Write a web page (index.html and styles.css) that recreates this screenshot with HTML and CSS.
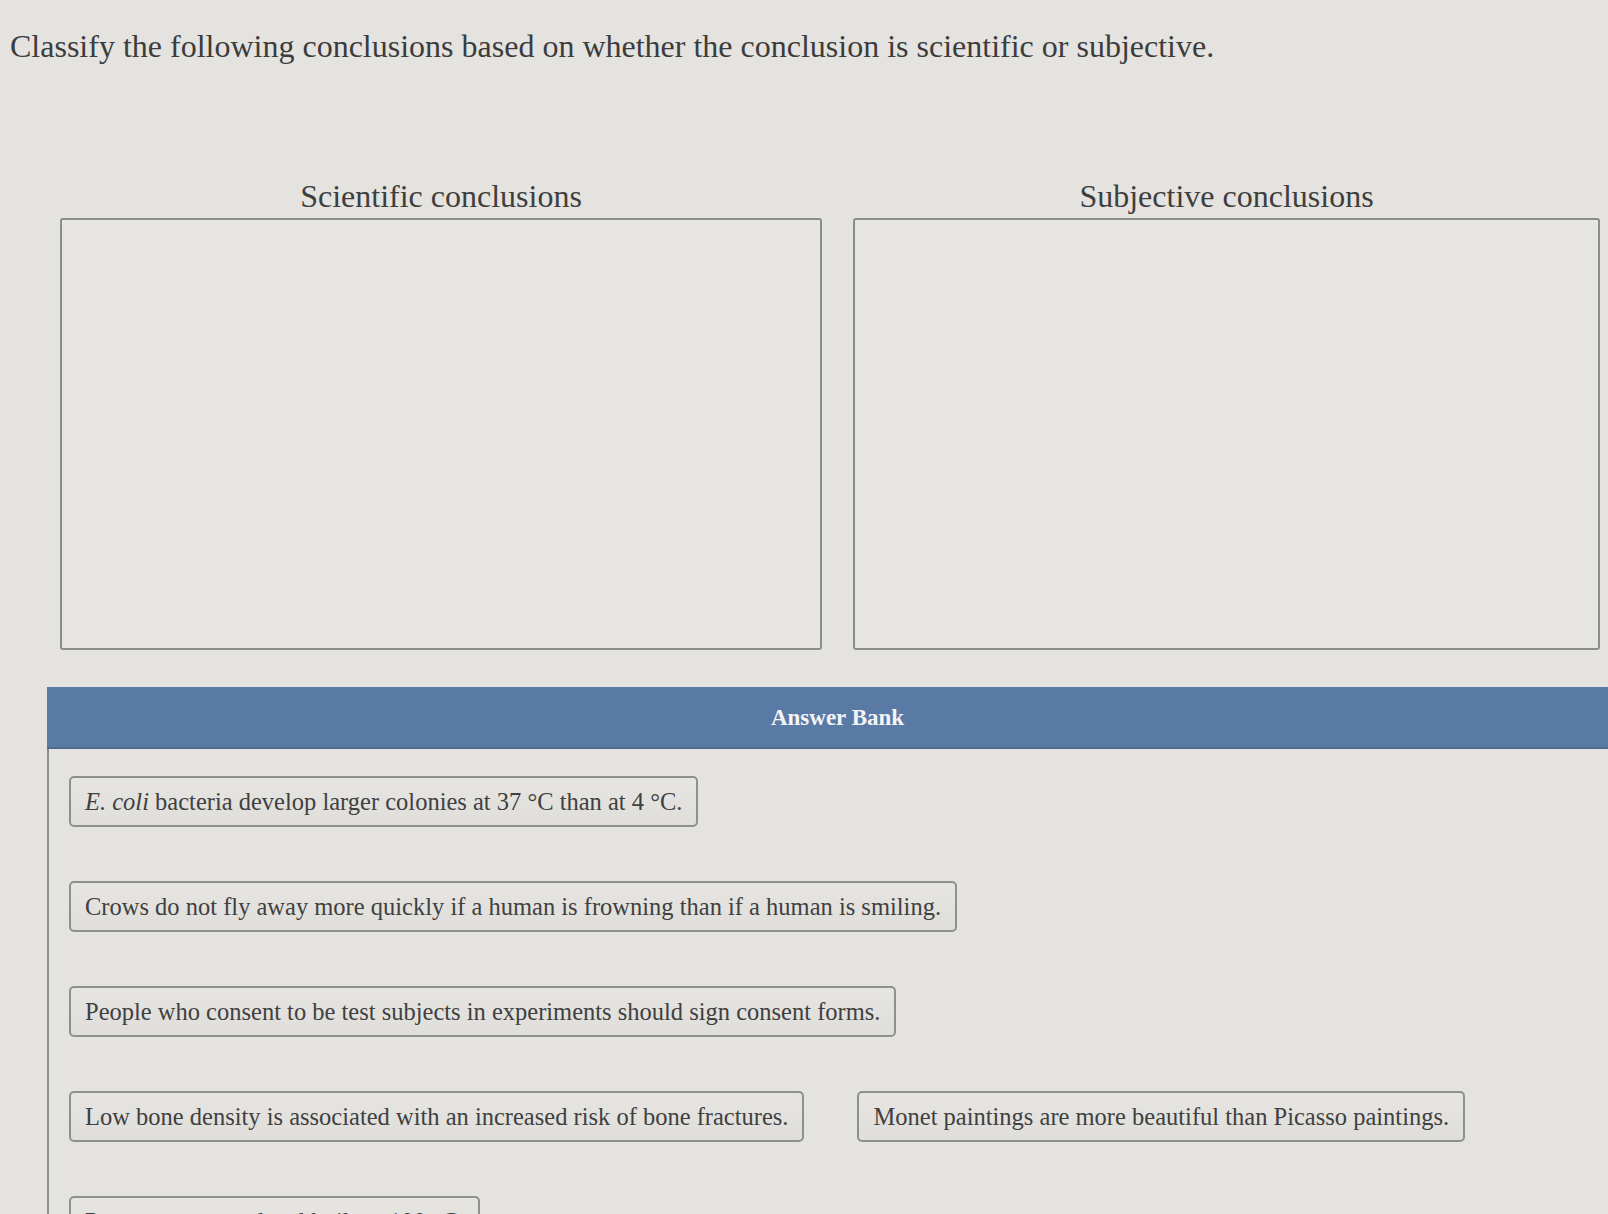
FILE: index.html
```html
<!DOCTYPE html>
<html lang="en">
<head>
<meta charset="utf-8">
<title>Classify conclusions</title>
<link rel="stylesheet" href="styles.css">
</head>
<body>
<div class="page">
  <h1 class="title">Classify the following conclusions based on whether the conclusion is scientific or subjective.</h1>

  <div class="zones">
    <div class="zone">
      <div class="zone-label">Scientific conclusions</div>
      <div class="zone-box"></div>
    </div>
    <div class="zone zone-right">
      <div class="zone-label">Subjective conclusions</div>
      <div class="zone-box"></div>
    </div>
  </div>

  <div class="bank">
    <div class="bank-header">Answer Bank</div>
    <div class="bank-body">
      <div class="bank-row"><div class="chip"><i>E. coli</i> bacteria develop larger colonies at 37 °C than at 4 °C.</div></div>
      <div class="bank-row"><div class="chip">Crows do not fly away more quickly if a human is frowning than if a human is smiling.</div></div>
      <div class="bank-row"><div class="chip">People who consent to be test subjects in experiments should sign consent forms.</div></div>
      <div class="bank-row">
        <div class="chip">Low bone density is associated with an increased risk of bone fractures.</div>
        <div class="chip">Monet paintings are more beautiful than Picasso paintings.</div>
      </div>
      <div class="bank-row"><div class="chip">Pure water at sea level boils at 100 °C.</div></div>
    </div>
  </div>
</div>
</body>
</html>
```

FILE: styles.css
```css
html, body {
  margin: 0;
  padding: 0;
  background: #e4e3e0;
  height: 100%;
  overflow: hidden;
}

.page {
  font-family: "Liberation Serif", "Times New Roman", serif;
  color: #404040;
  padding-top: 27px;
}

.title {
  margin: 0 0 0 10px;
  font-family: inherit;
  font-size: 32px;
  font-weight: normal;
  line-height: 38px;
  color: #3c3c3c;
}

.zones {
  display: grid;
  grid-template-columns: 762px 747px;
  column-gap: 31px;
  margin: 113px 0 0 60px;
}

.zone-label {
  text-align: center;
  font-size: 32px;
  line-height: 36px;
  color: #3e3e3e;
  margin-bottom: 4px;
}

.zone-box {
  height: 428px;
  border: 2px solid #8c8c8c;
  border-radius: 3px;
  background: #e6e5e2;
}

.bank {
  margin: 37px 0 0 47px;
  border-left: 2px solid #8d8d8d;
  min-height: 600px;
}

.bank-header {
  background: #5a7aa6;
  color: #f4f4f4;
  text-align: center;
  font-size: 23px;
  font-weight: bold;
  height: 62px;
  line-height: 62px;
  margin-left: -2px;
  border-bottom: 2px solid #4f6a90;
  box-sizing: border-box;
  padding-left: 20px;
}

.bank-body {
  padding: 27px 0 0 20px;
  display: flex;
  flex-direction: column;
  gap: 54px;
}

.bank-row {
  display: flex;
  gap: 53px;
}

.chip {
  height: 51px;
  box-sizing: border-box;
  border: 2px solid #8f8f8f;
  border-radius: 5px;
  background: linear-gradient(#e6e5e2, #dfdedb);
  padding: 0 14px;
  font-size: 24.5px;
  line-height: 47px;
  color: #404040;
  white-space: nowrap;
}
```
